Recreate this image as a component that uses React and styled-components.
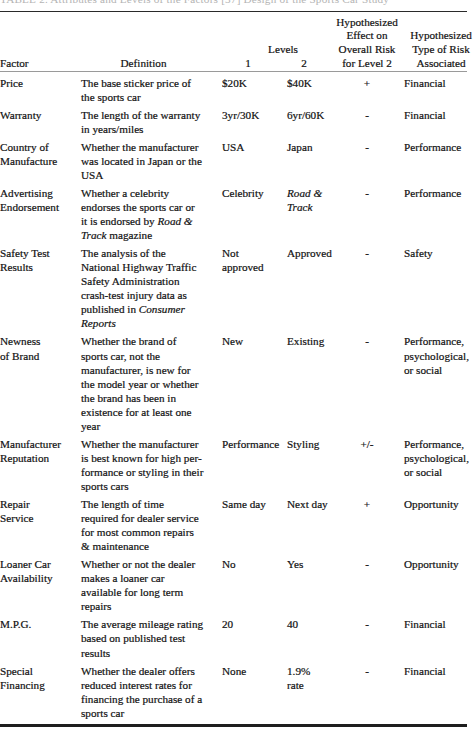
import React from "react";
import styled, { createGlobalStyle } from "styled-components";

const Global = createGlobalStyle`
  html, body { margin: 0; padding: 0; background: #ffffff; }
  body { overflow: hidden; }
`;

const COLS = "81px 141px 65px 43px 74px 70px";

const Page = styled.div`
  width: 474px;
  font-family: "Liberation Serif", "Times New Roman", serif;
  font-size: 11.2px;
  line-height: 14.06px;
  color: #111111;
  -webkit-text-stroke: 0.2px #111111;
  overflow: hidden;
  height: 729px;
`;

const Caption = styled.div`
  margin-top: -8px;
  color: #b4b4b4;
  -webkit-text-stroke: 0;
  white-space: nowrap;
  letter-spacing: 0.2px;
`;

const Rule = styled.div`
  width: 467px;
  height: ${(p) => p.$weight}px;
  background: ${(p) => p.$color};
  margin-top: ${(p) => p.$top || 0}px;
`;

const HeaderGrid = styled.div`
  display: grid;
  grid-template-columns: ${COLS};
  padding-top: 3.5px;
  line-height: 13.6px;
  padding-bottom: 0.6px;
`;

const HeadCell = styled.div`
  align-self: end;
  text-align: ${(p) => p.$align || "left"};
  padding-left: ${(p) => p.$pl || 0}px;
  padding-right: ${(p) => p.$pr || 0}px;
  white-space: nowrap;
`;

const LevelsGroup = styled.div`
  grid-column: 3 / span 2;
  align-self: end;
  display: flex;
  flex-direction: column;
`;

const LevelsLabel = styled.div`
  text-align: center;
  padding-left: 14px;
`;

const LevelsNums = styled.div`
  display: grid;
  grid-template-columns: 65px 43px;
`;

const Body = styled.div`
  display: flex;
  flex-direction: column;
  gap: 3.95px;
  padding-top: 4px;
  padding-bottom: 4.4px;
`;

const Row = styled.div`
  display: grid;
  grid-template-columns: ${COLS};
`;

const Cell = styled.div`
  text-align: ${(p) => p.$align || "left"};
  padding-left: ${(p) => p.$pl || 0}px;
`;

const Line = styled.span`
  display: block;
  white-space: nowrap;
`;

const Em = styled.i`
  font-style: italic;
`;

const rows = [
  {
    factor: ["Price"],
    def: ["The base sticker price of", "the sports car"],
    l1: ["$20K"],
    l2: ["$40K"],
    eff: "+",
    type: ["Financial"],
  },
  {
    factor: ["Warranty"],
    def: ["The length of the warranty", "in years/miles"],
    l1: ["3yr/30K"],
    l2: ["6yr/60K"],
    eff: "-",
    type: ["Financial"],
  },
  {
    factor: ["Country of", "Manufacture"],
    def: ["Whether the manufacturer", "was located in Japan or the", "USA"],
    l1: ["USA"],
    l2: ["Japan"],
    eff: "-",
    type: ["Performance"],
  },
  {
    factor: ["Advertising", "Endorsement"],
    def: [
      "Whether a celebrity",
      "endorses the sports car or",
      <>it is endorsed by <Em>Road &amp;</Em></>,
      <><Em>Track</Em> magazine</>,
    ],
    l1: ["Celebrity"],
    l2: [<Em>Road &amp;</Em>, <Em>Track</Em>],
    eff: "-",
    type: ["Performance"],
  },
  {
    factor: ["Safety Test", "Results"],
    def: [
      "The analysis of the",
      "National Highway Traffic",
      "Safety Administration",
      "crash-test injury data as",
      <>published in <Em>Consumer</Em></>,
      <Em>Reports</Em>,
    ],
    l1: ["Not", "approved"],
    l2: ["Approved"],
    eff: "-",
    type: ["Safety"],
  },
  {
    factor: ["Newness", "of Brand"],
    def: [
      "Whether the brand of",
      "sports car, not the",
      "manufacturer, is new for",
      "the model year or whether",
      "the brand has been in",
      "existence for at least one",
      "year",
    ],
    l1: ["New"],
    l2: ["Existing"],
    eff: "-",
    type: ["Performance,", "psychological,", "or social"],
  },
  {
    factor: ["Manufacturer", "Reputation"],
    def: [
      "Whether the manufacturer",
      "is best known for high per-",
      "formance or styling in their",
      "sports cars",
    ],
    l1: ["Performance"],
    l2: ["Styling"],
    eff: "+/-",
    type: ["Performance,", "psychological,", "or social"],
  },
  {
    factor: ["Repair", "Service"],
    def: [
      "The length of time",
      "required for dealer service",
      "for most common repairs",
      "& maintenance",
    ],
    l1: ["Same day"],
    l2: ["Next day"],
    eff: "+",
    type: ["Opportunity"],
  },
  {
    factor: ["Loaner Car", "Availability"],
    def: [
      "Whether or not the dealer",
      "makes a loaner car",
      "available for long term",
      "repairs",
    ],
    l1: ["No"],
    l2: ["Yes"],
    eff: "-",
    type: ["Opportunity"],
  },
  {
    factor: ["M.P.G."],
    def: ["The average mileage rating", "based on published test", "results"],
    l1: ["20"],
    l2: ["40"],
    eff: "-",
    type: ["Financial"],
  },
  {
    factor: ["Special", "Financing"],
    def: [
      "Whether the dealer offers",
      "reduced interest rates for",
      "financing the purchase of a",
      "sports car",
    ],
    l1: ["None"],
    l2: ["1.9%", "rate"],
    eff: "-",
    type: ["Financial"],
  },
];

const Lines = ({ items }) => items.map((t, i) => <Line key={i}>{t}</Line>);

export default function App() {
  return (
    <>
      <Global />
      <Page>
        <Caption>TABLE 2. Attributes and Levels of the Factors [37] Design of the Sports Car Study</Caption>
        <Rule $weight={1.6} $color="#2a2a2a" $top={4.6} />
        <HeaderGrid>
          <HeadCell>Factor</HeadCell>
          <HeadCell $align="center" $pr={16}>Definition</HeadCell>
          <LevelsGroup>
            <LevelsLabel>Levels</LevelsLabel>
            <LevelsNums>
              <HeadCell $align="center" $pr={13}>1</HeadCell>
              <HeadCell $align="center" $pr={9}>2</HeadCell>
            </LevelsNums>
          </LevelsGroup>
          <HeadCell $align="center">
            <Lines items={["Hypothesized", "Effect on", "Overall Risk", "for Level 2"]} />
          </HeadCell>
          <HeadCell $align="center" $pl={4}>
            <Lines items={["Hypothesized", "Type of Risk", "Associated"]} />
          </HeadCell>
        </HeaderGrid>
        <Rule $weight={1} $color="#9a9a9a" />
        <Body>
          {rows.map((r, i) => (
            <Row key={i}>
              <Cell><Lines items={r.factor} /></Cell>
              <Cell><Lines items={r.def} /></Cell>
              <Cell><Lines items={r.l1} /></Cell>
              <Cell><Lines items={r.l2} /></Cell>
              <Cell $align="center">{r.eff}</Cell>
              <Cell><Lines items={r.type} /></Cell>
            </Row>
          ))}
        </Body>
        <Rule $weight={3} $color="#1e1e1e" />
      </Page>
    </>
  );
}
